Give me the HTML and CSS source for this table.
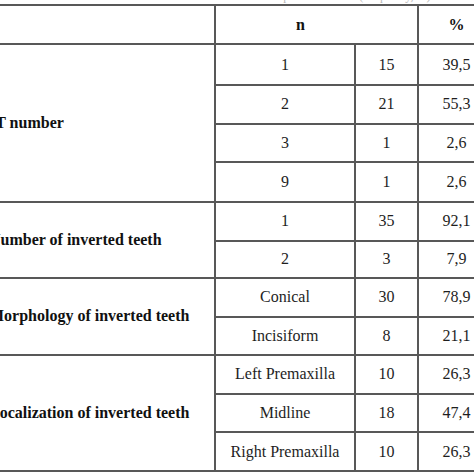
FILE: index.html
```html
<!DOCTYPE html>
<html>
<head>
<meta charset="utf-8">
<link rel="stylesheet" href="styles.css">
</head>
<body>
<div class="caption"><span>Sample distribution (frequency, %)</span></div>
<table class="data">
  <colgroup>
    <col class="c1"><col class="c2"><col class="c3"><col class="c4">
  </colgroup>
  <thead>
    <tr class="head">
      <th></th>
      <th colspan="2" class="hn">n</th>
      <th>%</th>
    </tr>
  </thead>
  <tbody>
    <tr class="tall">
      <th rowspan="4" class="label">IT number</th>
      <td>1</td><td>15</td><td>39,5</td>
    </tr>
    <tr><td>2</td><td>21</td><td>55,3</td></tr>
    <tr><td>3</td><td>1</td><td>2,6</td></tr>
    <tr class="mid"><td>9</td><td>1</td><td>2,6</td></tr>
    <tr>
      <th rowspan="2" class="label">Number of inverted teeth</th>
      <td>1</td><td>35</td><td>92,1</td>
    </tr>
    <tr class="short"><td>2</td><td>3</td><td>7,9</td></tr>
    <tr class="mid2">
      <th rowspan="2" class="label">Morphology of inverted teeth</th>
      <td>Conical</td><td>30</td><td>78,9</td>
    </tr>
    <tr><td>Incisiform</td><td>8</td><td>21,1</td></tr>
    <tr>
      <th rowspan="3" class="label">Localization of inverted teeth</th>
      <td>Left Premaxilla</td><td>10</td><td>26,3</td>
    </tr>
    <tr><td>Midline</td><td>18</td><td>47,4</td></tr>
    <tr class="mid2"><td>Right Premaxilla</td><td>10</td><td>26,3</td></tr>
  </tbody>
</table>
</body>
</html>
```
FILE: styles.css
```css
html, body {
  margin: 0;
  padding: 0;
  overflow: hidden;
  background: #ffffff;
  width: 474px;
  height: 474px;
}

.caption {
  height: 4px;
  overflow: hidden;
  padding-left: 262px;
  font-family: "Liberation Serif", "Times New Roman", serif;
  font-size: 12px;
  line-height: 12px;
  color: #b8b8b8;
  white-space: nowrap;
}

.caption span {
  display: block;
  margin-top: -10px;
}

.data {
  border-collapse: collapse;
  table-layout: fixed;
  width: 526px;
  margin-left: -32px;
  font-family: "Liberation Serif", "Times New Roman", serif;
  font-size: 16px;
  color: #1e1e1e;
}

.c1 { width: 246px; }
.c2 { width: 140px; }
.c3 { width: 63px; }
.c4 { width: 77px; }

.data th,
.data td {
  border: 2px solid #585858;
  padding: 0;
  text-align: center;
  vertical-align: middle;
  height: 36.5px;
  white-space: nowrap;
  overflow: hidden;
}

.data th {
  font-weight: bold;
  color: #111111;
}

.head th {
  height: 37px;
}

.hn {
  padding-right: 32px !important;
}

.data th.label {
  text-align: left;
  padding-left: 19px;
}

.tall td { height: 39px; }
.mid td { height: 38px; }
.short td { height: 35px; }
.mid2 td { height: 37px; }
```
